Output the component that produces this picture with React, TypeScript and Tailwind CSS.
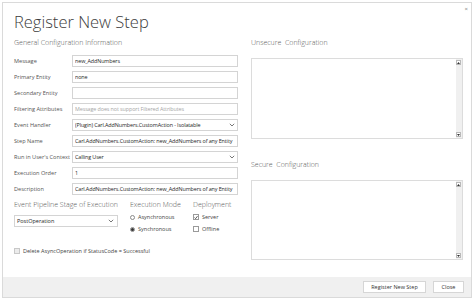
import React from "react";

const font = { fontFamily: '"Open Sans", "Noto Sans", "Liberation Sans", sans-serif' };

function Chevron() {
  return (
    <svg width="6" height="4" viewBox="0 0 6 4" className="shrink-0">
      <path d="M0.8 0.8 L3 3 L5.2 0.8" fill="none" stroke="#555" strokeWidth="0.8" />
    </svg>
  );
}

function Field({ value, placeholder, select }: { value?: string; placeholder?: string; select?: boolean }) {
  return (
    <div className="flex h-[12px] w-[166px] items-center border border-[#d4d4d4] bg-white pl-[2px] pr-[2px]">
      <span
        className={
          "flex-1 overflow-hidden whitespace-nowrap text-[5.4px] leading-[10px] tracking-[-0.1px] " +
          (placeholder ? "text-[#a6a6a6]" : "text-[#262626]")
        }
      >
        {value ?? placeholder}
      </span>
      {select && <Chevron />}
    </div>
  );
}

const rows: { label: string; value?: string; placeholder?: string; select?: boolean }[] = [
  { label: "Message", value: "new_AddNumbers" },
  { label: "Primary Entity", value: "none" },
  { label: "Secondary Entity", value: "" },
  { label: "Filtering Attributes", placeholder: "Message does not support Filtered Attributes" },
  { label: "Event Handler", value: "(Plugin) Carl.AddNumbers.CustomAction - Isolatable", select: true },
  { label: "Step Name", value: "Carl.AddNumbers.CustomAction: new_AddNumbers of any Entity" },
  { label: "Run in User's Context", value: "Calling User", select: true },
  { label: "Execution Order", value: "1" },
  { label: "Description", value: "Carl.AddNumbers.CustomAction: new_AddNumbers of any Entity" },
];

function ConfigBox({ height }: { height: string }) {
  return (
    <div className={"flex w-[212px] border border-[#dcdcdc] bg-white " + height}>
      <div className="flex-1" />
      <div className="flex w-[6px] flex-col justify-between bg-[#f0f0f0] py-[1px]">
        <div className="flex h-[5px] w-[5px] items-center justify-center border border-[#b9b9b9] bg-white">
          <svg width="3" height="2" viewBox="0 0 3 2">
            <path d="M0 2 L1.5 0 L3 2 Z" fill="#333" />
          </svg>
        </div>
        <div className="flex h-[5px] w-[5px] items-center justify-center border border-[#b9b9b9] bg-white">
          <svg width="3" height="2" viewBox="0 0 3 2">
            <path d="M0 0 L1.5 2 L3 0 Z" fill="#333" />
          </svg>
        </div>
      </div>
    </div>
  );
}

function Radio({ checked, label }: { checked?: boolean; label: string }) {
  return (
    <div className="flex h-[12px] items-center gap-[3px]">
      <div className="flex h-[5px] w-[5px] items-center justify-center rounded-full border border-[#8a8a8a] bg-white">
        {checked && <div className="h-[3px] w-[3px] rounded-full bg-[#333]" />}
      </div>
      <span className="text-[5.5px] text-[#444]">{label}</span>
    </div>
  );
}

function Check({ checked, label, gray }: { checked?: boolean; label: string; gray?: boolean }) {
  return (
    <div className="flex h-[12px] items-center gap-[3px]">
      <div
        className={
          "flex h-[6px] w-[6px] items-center justify-center border " +
          (gray ? "border-[#c8c8c8] bg-[#ececec]" : "border-[#9a9a9a] bg-white")
        }
      >
        {checked && (
          <svg width="5" height="5" viewBox="0 0 5 5">
            <path d="M0.7 2.6 L2 3.9 L4.4 0.8" fill="none" stroke="#222" strokeWidth="0.9" />
          </svg>
        )}
      </div>
      <span className="text-[5.5px] text-[#444]">{label}</span>
    </div>
  );
}

export default function App() {
  return (
    <div className="relative h-[300px] w-[474px] overflow-hidden bg-white" style={font}>
      <div className="ml-[2px] mt-[2px] flex h-[296px] w-[470px] flex-col border border-[#dadada] bg-white">
        <div className="relative flex-1 pl-[11px]">
          <span className="absolute right-[3px] top-[3px] text-[6px] leading-[6px] text-[#777]">×</span>
          <h1 className="mt-[8px] text-[16.5px] font-light leading-[22px] text-[#3c3c3c]">Register New Step</h1>

          <div className="mt-[4px] flex gap-[13px]">
            {/* left column */}
            <div className="flex w-[224px] flex-col">
              <div className="text-[7px] font-light leading-[12px] text-[#5a5a5a]">General Configuration Information</div>
              <div className="mt-[6px] flex flex-col gap-[4px]">
                {rows.map((r) => (
                  <div key={r.label} className="flex items-center justify-between">
                    <span className="whitespace-nowrap text-[5.6px] text-[#555]">{r.label}</span>
                    <Field value={r.value} placeholder={r.placeholder} select={r.select} />
                  </div>
                ))}
              </div>

              <div className="mt-[4px] flex gap-[12px]">
                <div className="flex w-[104px] flex-col">
                  <div className="whitespace-nowrap text-[7px] font-light leading-[12px] text-[#5a5a5a]">
                    Event Pipeline Stage of Execution
                  </div>
                  <div className="mt-[4px] flex h-[12px] items-center justify-between border border-[#d4d4d4] bg-white pl-[2px] pr-[3px]">
                    <span className="text-[5.5px] text-[#262626]">PostOperation</span>
                    <Chevron />
                  </div>
                </div>
                <div className="flex w-[51px] flex-col">
                  <div className="whitespace-nowrap text-[7px] font-light leading-[12px] text-[#5a5a5a]">Execution Mode</div>
                  <Radio label="Asynchronous" />
                  <Radio checked label="Synchronous" />
                </div>
                <div className="flex flex-col">
                  <div className="whitespace-nowrap text-[7px] font-light leading-[12px] text-[#5a5a5a]">Deployment</div>
                  <Check checked label="Server" />
                  <Check label="Offline" />
                </div>
              </div>

              <div className="mt-[10px]">
                <Check gray label="Delete AsyncOperation if StatusCode = Successful" />
              </div>
            </div>

            {/* right column */}
            <div className="flex w-[212px] flex-col">
              <div className="text-[7px] font-light leading-[12px] text-[#5a5a5a]">Unsecure&nbsp; Configuration</div>
              <div className="mt-[9px]">
                <ConfigBox height="h-[81px]" />
              </div>
              <div className="mt-[20px] text-[7px] font-light leading-[12px] text-[#5a5a5a]">Secure&nbsp; Configuration</div>
              <div className="mt-[9px]">
                <ConfigBox height="h-[80px]" />
              </div>
            </div>
          </div>
        </div>

        <div className="flex h-[20px] items-center justify-end gap-[7px] bg-[#f0f0f0] pr-[7px]">
          <button className="flex h-[12px] w-[63px] items-center justify-center border border-[#d6d6d6] bg-white text-[5.5px] text-[#333]">
            Register New Step
          </button>
          <button className="flex h-[12px] w-[31px] items-center justify-center border border-[#d6d6d6] bg-white text-[5.5px] text-[#333]">
            Close
          </button>
        </div>
      </div>
    </div>
  );
}
